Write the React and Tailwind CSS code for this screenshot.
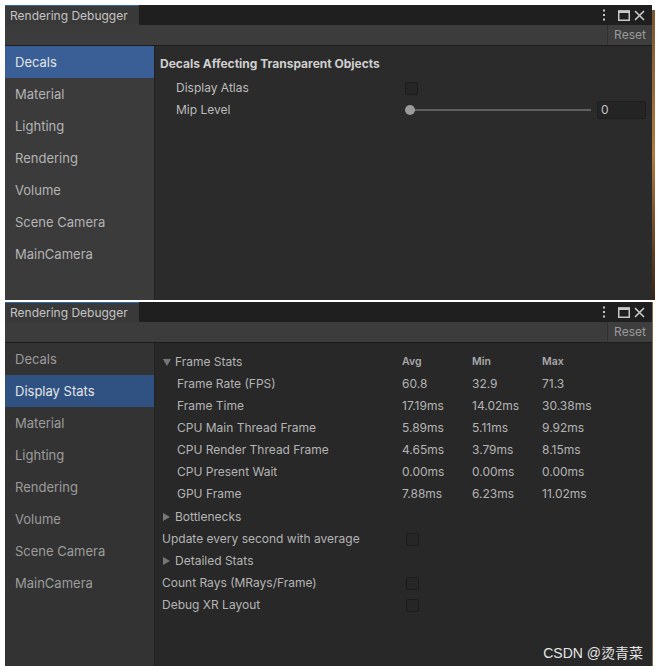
import React from "react";

const FONT = { fontFamily: "Inter, 'Noto Sans', sans-serif" };

function HeaderIcons() {
  return (
    <div className="flex items-center pr-[7px] text-[#c8c8c8]">
      <svg width="4" height="12" viewBox="0 0 4 12" className="mr-[12px]">
        <rect x="1" y="0.5" width="2" height="2" fill="#c8c8c8" />
        <rect x="1" y="5" width="2" height="2" fill="#c8c8c8" />
        <rect x="1" y="9.5" width="2" height="2" fill="#c8c8c8" />
      </svg>
      <svg width="12" height="11" viewBox="0 0 12 11" className="mr-[4px]">
        <rect x="0.75" y="1" width="10.5" height="9.25" fill="none" stroke="#c8c8c8" strokeWidth="1.5" />
        <rect x="0" y="0.5" width="12" height="2.5" fill="#c8c8c8" />
      </svg>
      <svg width="11" height="11" viewBox="0 0 11 11">
        <path d="M1 1 L10 10 M10 1 L1 10" stroke="#c8c8c8" strokeWidth="1.6" />
      </svg>
    </div>
  );
}

function Chrome() {
  return (
    <>
      <div className="flex h-[20px] shrink-0 bg-[#1f1f1f]">
        <div className="flex w-[134px] items-center border-t border-[#2f6aa3] bg-[#393939] pl-[5px] text-[12px] text-[#c4c4c4]">
          Rendering Debugger
        </div>
        <div className="flex-1" />
        <HeaderIcons />
      </div>
      <div className="flex h-[20px] shrink-0 justify-end bg-[#3c3c3c]">
        <div className="flex w-[45px] items-center justify-center border-l border-[#303030] bg-[#3e3e3e] text-[12px] text-[#9a9a9a]">
          Reset
        </div>
      </div>
      <div className="h-px shrink-0 bg-[#1c1c1c]" />
    </>
  );
}

function Sidebar({ items, selected, bg, textColor, selBg }) {
  return (
    <div className={`flex w-[150px] shrink-0 flex-col border-r border-[#222222] ${bg}`}>
      {items.map((it) => (
        <div
          key={it}
          className={`flex h-[32px] items-center pl-[10px] pt-[1px] text-[13px] ${
            it === selected ? `${selBg} text-[#e4e4e4]` : textColor
          }`}
        >
          {it}
        </div>
      ))}
    </div>
  );
}

function Checkbox() {
  return <div className="h-[13px] w-[13px] rounded-[2px] border border-[#1b1b1b] bg-[#262626]" />;
}

function Panel1() {
  return (
    <div className="flex h-[295px] w-[647px] flex-col">
      <Chrome />
      <div className="flex flex-1">
        <Sidebar
          items={["Decals", "Material", "Lighting", "Rendering", "Volume", "Scene Camera", "MainCamera"]}
          selected="Decals"
          bg="bg-[#3b3b3b]"
          textColor="text-[#b4b4b4]"
          selBg="bg-[#3a5e96]"
        />
        <div className="flex flex-1 flex-col bg-[#2b2b2b] pt-[7px] text-[12px] text-[#bdbdbd]">
          <div className="flex h-[22px] items-center pl-[5px] font-bold text-[#cfcfcf]">
            Decals Affecting Transparent Objects
          </div>
          <div className="mt-[2px] flex h-[22px] items-center">
            <div className="w-[250px] pl-[21px]">Display Atlas</div>
            <Checkbox />
          </div>
          <div className="flex h-[22px] items-center">
            <div className="w-[250px] pl-[21px]">Mip Level</div>
            <div className="relative flex h-[12px] w-[186px] items-center">
              <div className="h-[2px] w-full bg-[#5f5f5f]" />
              <div className="absolute left-0 top-[1px] h-[10px] w-[10px] rounded-full bg-[#9b9b9b]" />
            </div>
            <div className="ml-[6px] flex h-[18px] w-[49px] items-center rounded-[2px] border border-[#1e1e1e] bg-[#242424] pl-[3px] text-[#c4c4c4]">
              0
            </div>
          </div>
        </div>
      </div>
    </div>
  );
}

const stats = [
  ["Frame Rate (FPS)", "60.8", "32.9", "71.3"],
  ["Frame Time", "17.19ms", "14.02ms", "30.38ms"],
  ["CPU Main Thread Frame", "5.89ms", "5.11ms", "9.92ms"],
  ["CPU Render Thread Frame", "4.65ms", "3.79ms", "8.15ms"],
  ["CPU Present Wait", "0.00ms", "0.00ms", "0.00ms"],
  ["GPU Frame", "7.88ms", "6.23ms", "11.02ms"],
];

function Tri({ down }) {
  return (
    <span className="inline-flex w-[12px] items-center">
      {down ? (
        <svg width="8" height="7" viewBox="0 0 8 7">
          <path d="M0 0 H8 L4 7 Z" fill="#777777" />
        </svg>
      ) : (
        <svg width="7" height="8" viewBox="0 0 7 8">
          <path d="M0 0 V8 L7 4 Z" fill="#777777" />
        </svg>
      )}
    </span>
  );
}

function Panel2() {
  return (
    <div className="relative flex h-[364px] w-[647px] flex-col">
      <Chrome />
      <div className="flex flex-1">
        <Sidebar
          items={["Decals", "Display Stats", "Material", "Lighting", "Rendering", "Volume", "Scene Camera", "MainCamera"]}
          selected="Display Stats"
          bg="bg-[#333333]"
          textColor="text-[#9c9c9c]"
          selBg="bg-[#2f5283]"
        />
        <div className="flex flex-1 flex-col bg-[#282828] pt-[8px] text-[12px] text-[#b4b4b4]">
          <div className="flex h-[22px] items-center">
            <div className="flex w-[247px] items-center pl-[8px]">
              <Tri down />
              Frame Stats
            </div>
            <div className="w-[70px] text-[10.5px] font-semibold text-[#a8a8a8]">Avg</div>
            <div className="w-[70px] text-[10.5px] font-semibold text-[#a8a8a8]">Min</div>
            <div className="w-[70px] text-[10.5px] font-semibold text-[#a8a8a8]">Max</div>
          </div>
          {stats.map((s) => (
            <div key={s[0]} className="flex h-[22px] items-center">
              <div className="w-[247px] pl-[22px]">{s[0]}</div>
              <div className="w-[70px]">{s[1]}</div>
              <div className="w-[70px]">{s[2]}</div>
              <div className="w-[70px]">{s[3]}</div>
            </div>
          ))}
          <div className="flex h-[23px] items-center pl-[8px] pt-[1px]">
            <Tri />
            Bottlenecks
          </div>
          <div className="flex h-[22px] items-center">
            <div className="w-[251px] pl-[7px]">Update every second with average</div>
            <Checkbox />
          </div>
          <div className="flex h-[22px] items-center pl-[8px]">
            <Tri />
            Detailed Stats
          </div>
          <div className="flex h-[22px] items-center">
            <div className="w-[251px] pl-[7px]">Count Rays (MRays/Frame)</div>
            <Checkbox />
          </div>
          <div className="flex h-[22px] items-center">
            <div className="w-[251px] pl-[7px]">Debug XR Layout</div>
            <Checkbox />
          </div>
        </div>
      </div>
      <div
        className="absolute bottom-[2px] right-[9px] text-[14px] text-[#e6e6e6]"
        style={{ fontFamily: "'Liberation Sans', 'Noto Sans CJK SC', sans-serif" }}
      >
        CSDN @烫青菜
      </div>
    </div>
  );
}

export default function App() {
  return (
    <div className="h-[672px] w-[659px] bg-white pl-[5px] pt-[5px]" style={FONT}>
      <div className="flex">
        <Panel1 />
        <div className="mt-[5px] h-[290px] w-[3px] bg-gradient-to-b from-[#7a5530] via-[#b07a40] to-[#3a2414]" />
      </div>
      <div className="h-[2px]" />
      <div className="flex">
        <Panel2 />
        <div className="h-[364px] w-px bg-[#8a6a48]" />
      </div>
    </div>
  );
}
